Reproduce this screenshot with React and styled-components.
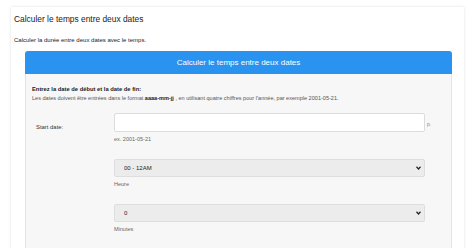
import styled, { createGlobalStyle } from "styled-components";

const GlobalStyle = createGlobalStyle`
  html {
    overflow-y: scroll;
  }
  html::-webkit-scrollbar {
    width: 8px;
  }
  html::-webkit-scrollbar-track {
    background: #f6f6f6;
    border-left: 1px solid #ececec;
  }
  html::-webkit-scrollbar-thumb {
    background: #bdbdbd;
  }
  body {
    margin: 0;
    background: #fff;
    font-family: "Liberation Sans", Arial, sans-serif;
    color: #222;
  }
`;

const Page = styled.div`
  padding: 7px 10px 120px 11px;
`;

const Card = styled.div`
  background: #fff;
  box-shadow: 0 0 3px rgba(0, 0, 0, 0.12);
  padding: 6px 12px 30px 3px;
`;

const Title = styled.h1`
  margin: 0;
  font-size: 8.4px;
  font-weight: normal;
  line-height: 13px;
  color: #222;
`;

const Lead = styled.p`
  margin: 10px 0 0;
  font-size: 6px;
  line-height: 8px;
  color: #222;
`;

const Panel = styled.div`
  margin: 7px 0 0 11px;
  border: 1px solid #e4e4e4;
  border-radius: 3px;
  background: #f7f7f7;
`;

const PanelHead = styled.div`
  background: #2a93ef;
  color: #fff;
  height: 23px;
  margin: -1px -1px 0;
  border-radius: 3px 3px 0 0;
  display: flex;
  align-items: center;
  justify-content: center;
  font-size: 8px;
`;

const PanelBody = styled.div`
  padding: 11px 6px 20px 6px;
`;

const Intro = styled.div`
  font-size: 5.8px;
  line-height: 9px;
  color: #222;

  b {
    font-weight: bold;
  }
`;

const Note = styled.div`
  font-size: 5.55px;
  line-height: 9px;
  color: #555;

  b {
    color: #222;
  }
`;

const Row = styled.div`
  display: grid;
  grid-template-columns: 82px 311px auto;
  align-items: start;
  margin-top: ${(p) => p.$top || 0}px;
`;

const Label = styled.label`
  font-size: 5.9px;
  color: #333;
  padding: 5px 0 0 4px;
  line-height: 19px;
`;

const Field = styled.div`
  display: flex;
  flex-direction: column;
`;

const TextInput = styled.input`
  box-sizing: border-box;
  height: 19px;
  width: 100%;
  border: 1px solid #dcdcdc;
  border-radius: 2px;
  background: #fff;
  margin: 0;
  padding: 0 6px;
  font-size: 6px;
`;

const SelectWrap = styled.div`
  position: relative;
  height: 18px;
`;

const Select = styled.select`
  box-sizing: border-box;
  appearance: none;
  display: block;
  width: 100%;
  height: 18px;
  border: 1px solid #dedede;
  border-radius: 2px;
  background: #ececec;
  padding: 0 9px;
  font-family: "Liberation Sans", Arial, sans-serif;
  font-size: 6px;
  color: #222;
  margin: 0;
`;

const Chevron = styled.svg`
  position: absolute;
  right: 4px;
  top: 7px;
  width: 5px;
  height: 4px;
  pointer-events: none;
`;

const Help = styled.div`
  font-size: 5.5px;
  color: #666;
  line-height: 8px;
  margin-top: 3px;
`;

const Side = styled.span`
  font-size: 5px;
  color: #888;
  padding: 6px 0 0 2px;
  line-height: 10px;
`;

const Button = styled.button`
  margin-top: 18px;
  background: #2a93ef;
  color: #fff;
  border: 0;
  border-radius: 2px;
  font-size: 6px;
  padding: 6px 14px;
`;

const Arrow = () => (
  <Chevron viewBox="0 0 10 8">
    <path d="M1 1.5 L5 6 L9 1.5" stroke="#222" strokeWidth="2.4" fill="none" />
  </Chevron>
);

const hours = ["00 - 12AM", "01 - 1AM", "02 - 2AM", "03 - 3AM"];
const minutes = ["0", "15", "30", "45"];

const DateBlock = ({ label, top }) => (
  <>
    <Row $top={top}>
      <Label>{label}</Label>
      <Field>
        <TextInput type="text" />
        <Help>ex. 2001-05-21</Help>
      </Field>
      <Side>p.</Side>
    </Row>
    <Row $top={16}>
      <span />
      <Field>
        <SelectWrap>
          <Select defaultValue={hours[0]}>
            {hours.map((h) => (
              <option key={h}>{h}</option>
            ))}
          </Select>
          <Arrow />
        </SelectWrap>
        <Help>Heure</Help>
      </Field>
    </Row>
    <Row $top={16}>
      <span />
      <Field>
        <SelectWrap>
          <Select defaultValue={minutes[0]}>
            {minutes.map((m) => (
              <option key={m}>{m}</option>
            ))}
          </Select>
          <Arrow />
        </SelectWrap>
        <Help>Minutes</Help>
      </Field>
    </Row>
  </>
);

export default function App() {
  return (
    <>
      <GlobalStyle />
      <Page>
        <Card>
          <Title>Calculer le temps entre deux dates</Title>
          <Lead>Calculer la durée entre deux dates avec le temps.</Lead>
          <Panel>
            <PanelHead>Calculer le temps entre deux dates</PanelHead>
            <PanelBody>
              <Intro>
                <b>Entrez la date de début et la date de fin:</b>
              </Intro>
              <Note>
                Les dates doivent être entrées dans le format <b>aaaa-mm-jj</b> , en
                utilisant quatre chiffres pour l'année, par exemple 2001-05-21.
              </Note>
              <Row $top={10}>
                <span />
              </Row>
              <DateBlock label="Start date:" top={0} />
              <DateBlock label="End date:" top={22} />
              <Row $top={4}>
                <span />
                <div>
                  <Button>Calculer</Button>
                </div>
              </Row>
            </PanelBody>
          </Panel>
        </Card>
      </Page>
    </>
  );
}
